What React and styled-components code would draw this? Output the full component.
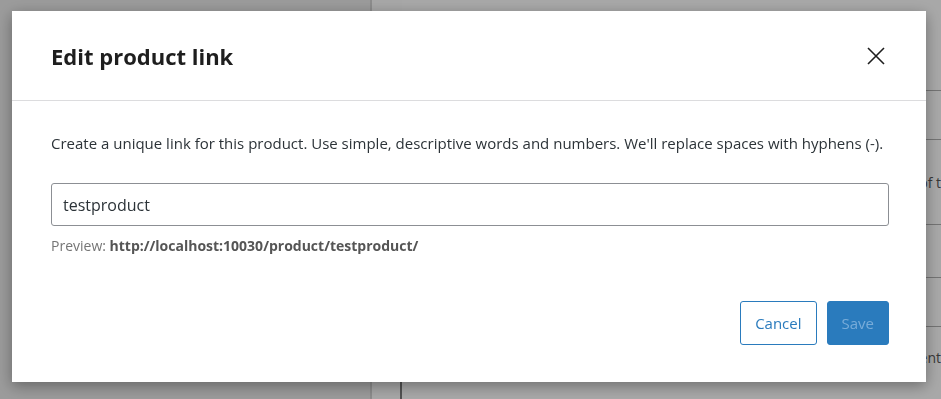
import React from 'react';
import styled, { createGlobalStyle } from 'styled-components';

const GlobalStyle = createGlobalStyle`
  html, body {
    margin: 0;
    padding: 0;
    height: 100%;
    overflow: hidden;
  }
  body {
    font-family: "Open Sans", "Noto Sans", sans-serif;
    color: #1e1e1e;
  }
`;

const Page = styled.div`
  display: flex;
  height: 100vh;
  background: #ffffff;
`;

const Sidebar = styled.div`
  width: 370px;
  background: #ebebeb;
  border-right: 2px solid #d4d4d4;
`;

const Gutter = styled.div`
  width: 30px;
  background: #fdfdfd;
  display: flex;
  flex-direction: column;
  justify-content: flex-end;
`;

const Rail = styled.div`
  height: 40px;
  border-right: 2px solid #7c7c7c;
`;

const Main = styled.div`
  flex: 1;
  display: flex;
  flex-direction: column;
  padding-top: 90px;
`;

const Row = styled.div`
  height: ${p => p.h}px;
  border-top: 1px solid #b0b0b0;
  display: flex;
  align-items: center;
  justify-content: flex-end;
  font-size: 14px;
  color: #555;
  white-space: nowrap;
  overflow: hidden;
`;

const Overlay = styled.div`
  position: fixed;
  inset: 0;
  background: rgba(0, 0, 0, 0.34);
`;

const Modal = styled.div`
  position: fixed;
  left: 12px;
  top: 11px;
  width: 914px;
  height: 371px;
  background: #fff;
  box-shadow: 0 4px 14px rgba(0, 0, 0, 0.35);
  display: flex;
  flex-direction: column;
`;

const Header = styled.div`
  height: 90px;
  box-sizing: border-box;
  border-bottom: 1px solid #dcdcde;
  display: flex;
  align-items: center;
  justify-content: space-between;
  padding: 0 38px 0 39px;
`;

const Title = styled.h1`
  margin: 0;
  font-size: 22px;
  font-weight: 700;
  color: #1e1e1e;
`;

const CloseButton = styled.button`
  border: 0;
  background: none;
  padding: 0;
  width: 24px;
  height: 24px;
  display: flex;
  align-items: center;
  justify-content: center;
  color: #1e1e1e;
`;

const Body = styled.div`
  flex: 1;
  display: flex;
  flex-direction: column;
  padding: 32px 37px 37px 39px;
`;

const Description = styled.p`
  margin: 0 0 30px;
  font-size: 15px;
  line-height: 20px;
  color: #2c3338;
  white-space: nowrap;
`;

const Input = styled.input`
  box-sizing: border-box;
  width: 100%;
  height: 43px;
  border: 1px solid #8c8f94;
  border-radius: 3px;
  padding: 0 11px;
  font-family: inherit;
  font-size: 16px;
  color: #2c3338;
  outline: none;
`;

const Preview = styled.div`
  margin-top: 11px;
  font-size: 14px;
  line-height: 18px;
  color: #757575;

  strong {
    color: #555;
    font-weight: 700;
  }
`;

const Actions = styled.div`
  margin-top: auto;
  display: flex;
  justify-content: flex-end;
  gap: 10px;
`;

const Button = styled.button`
  height: 44px;
  box-sizing: border-box;
  border-radius: 3px;
  padding: 0 14px;
  font-family: inherit;
  font-size: 15px;
  border: 1px solid #2a7bbd;
  background: ${p => (p.primary ? '#2a7bbd' : '#fff')};
  color: ${p => (p.primary ? '#78acd9' : '#2a7bbd')};
`;

const CloseIcon = () => (
  <svg width="18" height="18" viewBox="0 0 18 18" fill="none">
    <path d="M1 1L17 17M17 1L1 17" stroke="currentColor" strokeWidth="1.6" />
  </svg>
);

export default function App() {
  return (
    <>
      <GlobalStyle />
      <Page>
        <Sidebar />
        <Gutter>
          <Rail />
        </Gutter>
        <Main>
          <Row h={48} />
          <Row h={84}>use of t</Row>
          <Row h={52} />
          <Row h={48} />
          <Row h={60}>ent</Row>
        </Main>
      </Page>
      <Overlay />
      <Modal>
        <Header>
          <Title>Edit product link</Title>
          <CloseButton aria-label="Close">
            <CloseIcon />
          </CloseButton>
        </Header>
        <Body>
          <Description>
            Create a unique link for this product. Use simple, descriptive words and numbers. We'll replace spaces with hyphens (-).
          </Description>
          <Input defaultValue="testproduct" />
          <Preview>
            Preview: <strong>http://localhost:10030/product/testproduct/</strong>
          </Preview>
          <Actions>
            <Button>Cancel</Button>
            <Button primary disabled>Save</Button>
          </Actions>
        </Body>
      </Modal>
    </>
  );
}
